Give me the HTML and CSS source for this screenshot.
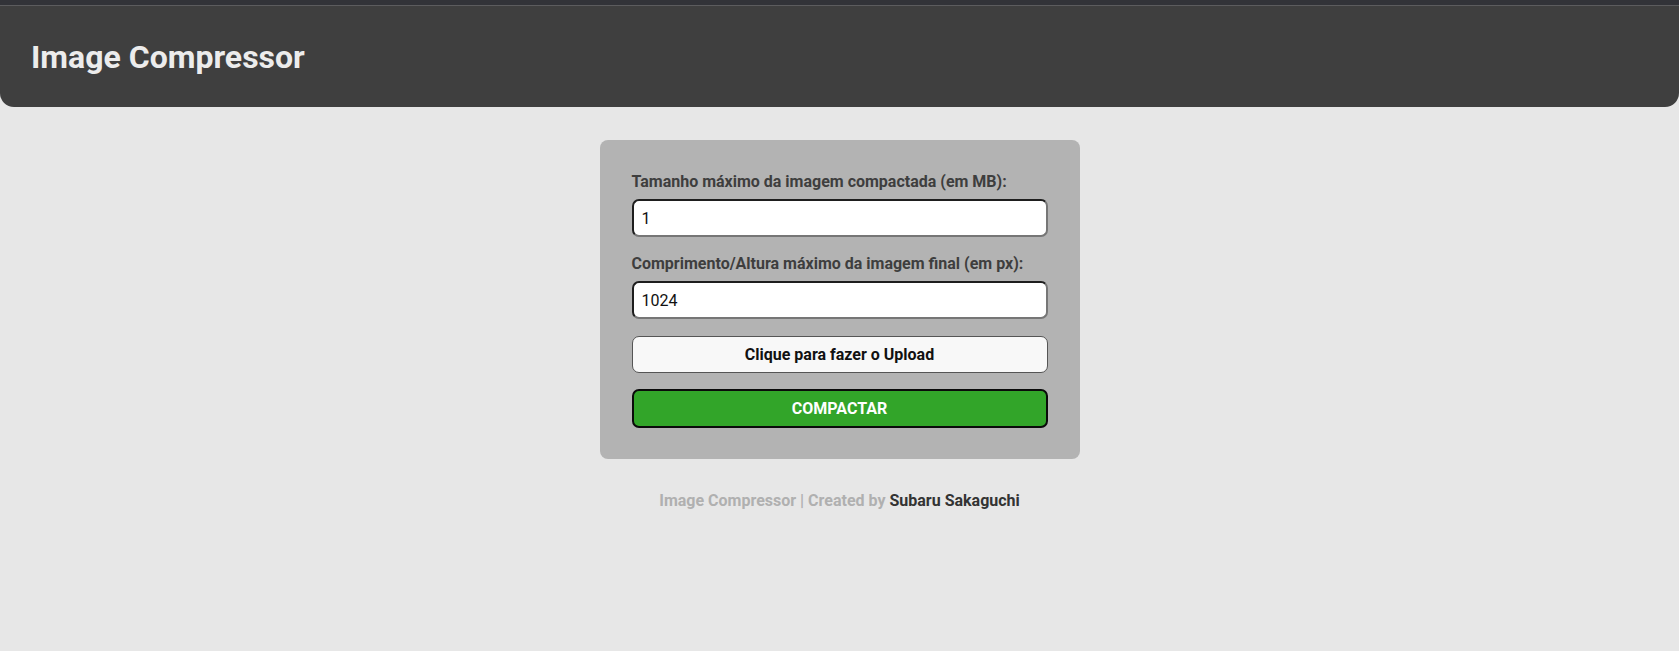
FILE: index.html
```html
<!DOCTYPE html>
<html lang="pt">
<head>
<meta charset="utf-8">
<title>Image Compressor</title>
<link rel="stylesheet" href="styles.css">
</head>
<body>
<div class="topstrip"></div>
<header class="header">
  <h1 class="title">Image Compressor</h1>
</header>
<main class="main">
  <form class="card">
    <label class="label" for="size">Tamanho máximo da imagem compactada (em MB):</label>
    <input class="field" id="size" type="text" value="1">
    <label class="label" for="dim">Comprimento/Altura máximo da imagem final (em px):</label>
    <input class="field" id="dim" type="text" value="1024">
    <button type="button" class="upload">Clique para fazer o Upload</button>
    <button type="button" class="compact">COMPACTAR</button>
  </form>
  <footer class="footer">Image Compressor | Created by <span class="author">Subaru Sakaguchi</span></footer>
</main>
</body>
</html>
```
FILE: styles.css
```css
* { box-sizing: border-box; }
html, body {
  margin: 0;
  padding: 0;
  background: #e7e7e7;
  font-family: Roboto, "Liberation Sans", Arial, sans-serif;
}
.topstrip {
  height: 6px;
  background: #323338;
  border-bottom: 1px solid #5c5c5e;
}
.header {
  height: 101px;
  background: #3f3f3f;
  border-radius: 0 0 14px 14px;
  display: flex;
  align-items: center;
  padding-left: 31px;
}
.title {
  margin: 0;
  font-size: 32px;
  font-weight: 700;
  color: #ececec;
}
.main {
  display: flex;
  flex-direction: column;
  align-items: center;
  padding-top: 33px;
}
.card {
  width: 480px;
  background: #b3b3b3;
  border-radius: 8px;
  padding: 32px 32px 31px;
  display: flex;
  flex-direction: column;
}
.label {
  font-size: 16px;
  line-height: 19px;
  font-weight: 700;
  color: #3e3e3e;
  margin-bottom: 8px;
}
.field {
  height: 38px;
  margin: 0 0 17px;
  padding: 0 8px;
  font-family: Roboto, "Liberation Sans", Arial, sans-serif;
  font-size: 16px;
  color: #111;
  background: #fff;
  border: 2px solid;
  border-color: #1e1e1e #767676 #767676 #1e1e1e;
  border-radius: 7px;
  outline: none;
}
.upload {
  height: 37px;
  margin: 0 0 16px;
  font-family: Roboto, "Liberation Sans", Arial, sans-serif;
  font-size: 16px;
  font-weight: 700;
  color: #111;
  background: #f8f8f8;
  border: 1px solid #555;
  border-radius: 7px;
}
.compact {
  height: 39px;
  margin: 0;
  font-family: Roboto, "Liberation Sans", Arial, sans-serif;
  font-size: 16px;
  font-weight: 700;
  color: #fff;
  background: #32a529;
  border: 2px solid #0a0a0a;
  border-radius: 7px;
}
.footer {
  margin-top: 32px;
  font-size: 16px;
  line-height: 19px;
  font-weight: 700;
  color: #b0b0b0;
}
.author {
  color: #333;
}
```
